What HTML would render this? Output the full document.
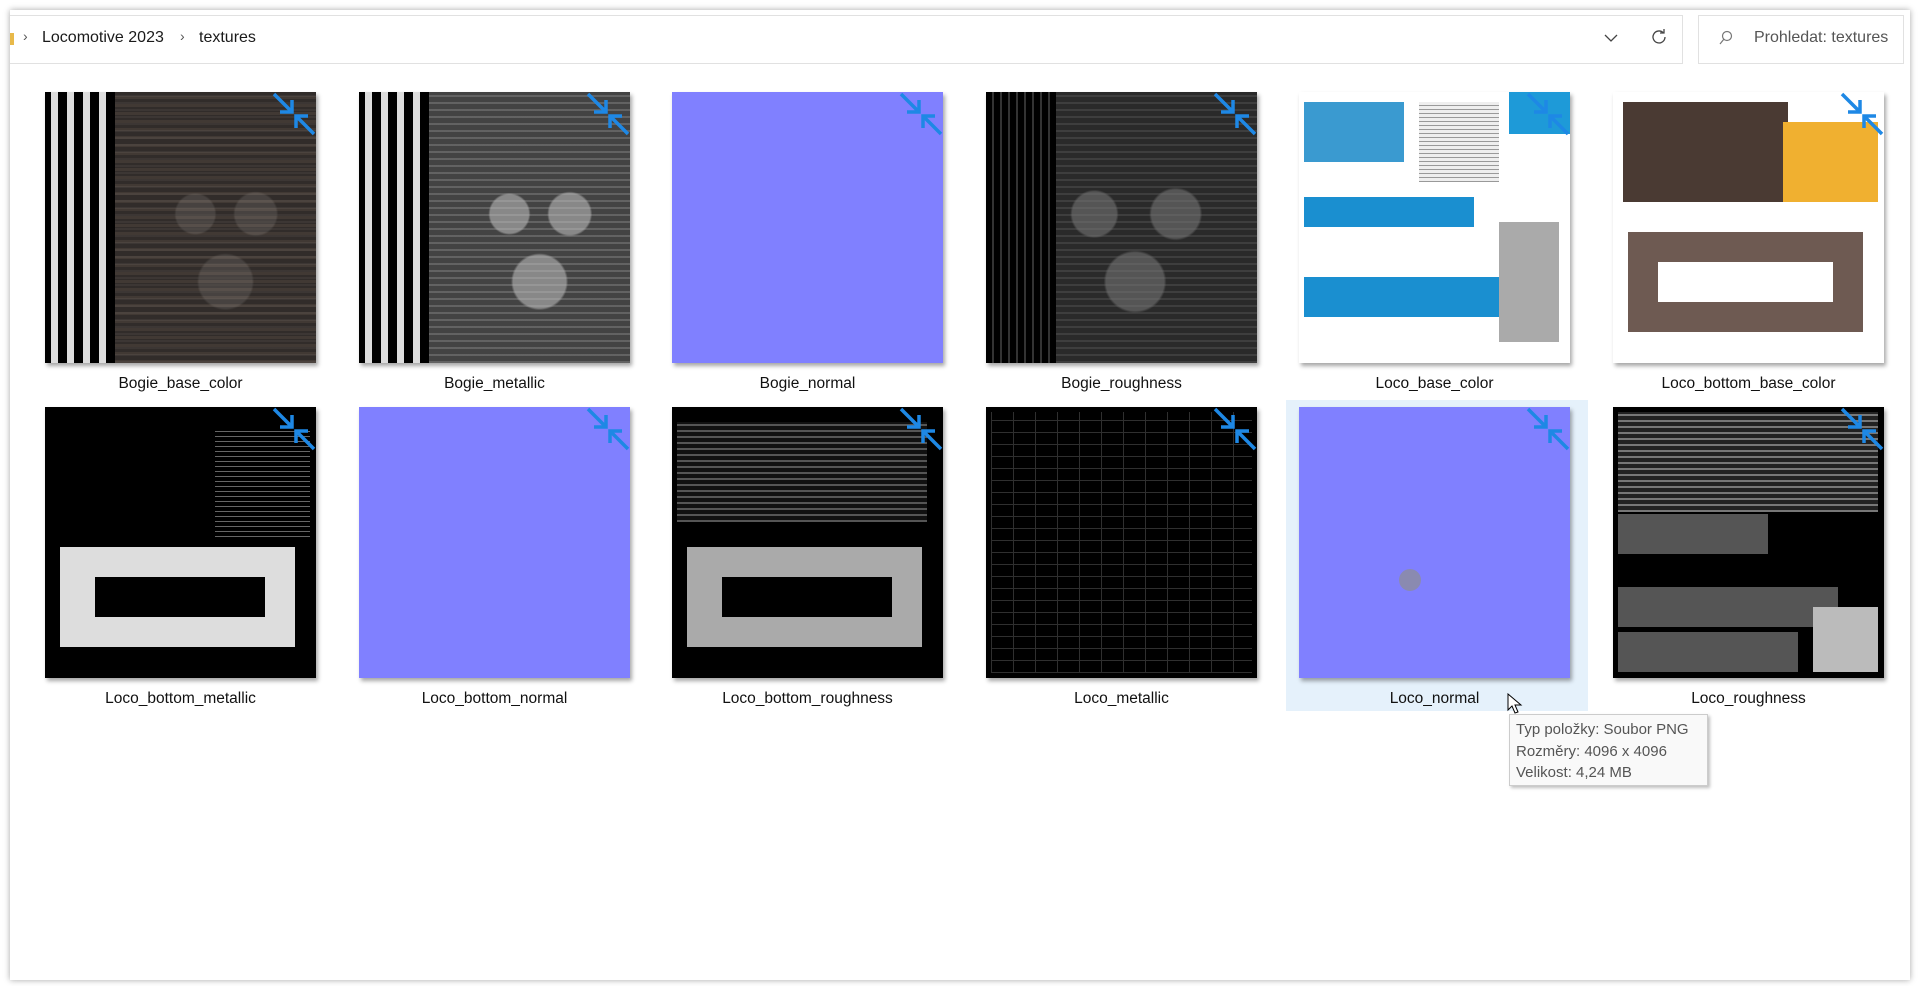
<!DOCTYPE html>
<html><head><meta charset="utf-8"><style>
*{margin:0;padding:0;box-sizing:border-box}
body{width:1920px;height:986px;background:#fff;font-family:"Segoe UI","Liberation Sans",sans-serif;position:relative;overflow:hidden}
.win{position:absolute;left:10px;top:10px;width:1900px;height:970px;background:#fff;box-shadow:0 0 6px rgba(0,0,0,.35)}
.addr{position:absolute;left:10px;top:15px;width:1673px;height:49px;border:1px solid #e1e1e1;border-left:none;background:#fff}
.search{position:absolute;left:1698px;top:15px;width:206px;height:49px;border:1px solid #e1e1e1;background:#fff}
.t{position:absolute;font-size:16px;color:#1a1a1a;white-space:nowrap}
.th{position:absolute;width:271px;height:271px;box-shadow:2px 3px 4px rgba(0,0,0,.35);overflow:hidden}
.lbl{position:absolute;width:313px;text-align:center;font-size:15.5px;color:#111}
.blue{background:#8080ff}
.dark{background:
 repeating-linear-gradient(0deg,rgba(120,120,120,.25) 0 2px,transparent 2px 7px),
 radial-gradient(circle at 40% 45%,#555 0 10%,transparent 11%),
 radial-gradient(circle at 70% 45%,#555 0 10%,transparent 11%),
 radial-gradient(circle at 55% 70%,#555 0 12%,transparent 13%),
 #2a2a2a}
.stripes{position:absolute;left:0;top:0;width:70px;height:100%;background:repeating-linear-gradient(90deg,#000 0 6px,#ddd 6px 13px,#000 13px 16px)}
.bk{background:#000}
</style></head><body>
<div class="win"></div>
<div class="addr"></div>
<div class="search"></div>
<div style="position:absolute;left:10px;top:33px;width:4px;height:12px;background:#e8b94a"></div>
<div class="t" style="left:23px;top:28px;color:#555;font-size:14px">›</div>
<div class="t" style="left:42px;top:29px">Locomotive 2023</div>
<div class="t" style="left:180px;top:28px;color:#555;font-size:14px">›</div>
<div class="t" style="left:199px;top:29px">textures</div>
<svg style="position:absolute;left:1603px;top:32px" width="16" height="12"><path d="M2 3l6 6 6-6" stroke="#444" fill="none" stroke-width="1.3"/></svg>
<svg style="position:absolute;left:1649px;top:27px" width="20" height="20"><path d="M16 10a6 6 0 1 1-2-4.5M15 2v4h-4" stroke="#444" fill="none" stroke-width="1.3"/></svg>
<svg style="position:absolute;left:1718px;top:30px" width="16" height="16"><circle cx="9" cy="6" r="4.5" stroke="#777" fill="none" stroke-width="1.2"/><path d="M6 9l-4 5" stroke="#777" stroke-width="1.2"/></svg>
<div class="t" style="left:1754px;top:29px;color:#555">Prohledat: textures</div>

<div style="position:absolute;left:1286px;top:400px;width:302px;height:311px;background:#e5f1fb"></div>

<div class="th" style="left:45px;top:92px;background:repeating-linear-gradient(0deg,#5a4a40 0 3px,#3a302b 3px 8px)"><div class="stripes"></div><div class="dark" style="position:absolute;left:70px;top:0;right:0;bottom:0;opacity:.5"></div></div>
<div class="th" style="left:359px;top:92px;background:#333"><div class="stripes"></div><div class="dark" style="position:absolute;left:70px;top:0;right:0;bottom:0;filter:brightness(1.6)"></div></div>
<div class="th blue" style="left:672px;top:92px"></div>
<div class="th dark" style="left:986px;top:92px"><div style="position:absolute;left:0;top:0;width:70px;height:100%;background:repeating-linear-gradient(90deg,#000 0 6px,#333 6px 8px)"></div></div>
<div class="th" style="left:1299px;top:92px;background:#fff">
 <div style="position:absolute;left:5px;top:10px;width:100px;height:60px;background:#3a9ad0"></div>
 <div style="position:absolute;left:210px;top:0;width:61px;height:42px;background:#1e9ad8"></div>
 <div style="position:absolute;left:5px;top:105px;width:170px;height:30px;background:#1a8fd0"></div>
 <div style="position:absolute;left:5px;top:185px;width:200px;height:40px;background:#1a8fd0"></div>
 <div style="position:absolute;left:120px;top:10px;width:80px;height:80px;background:repeating-linear-gradient(0deg,#999 0 1px,#eee 1px 4px)"></div>
 <div style="position:absolute;left:200px;top:130px;width:60px;height:120px;background:#aaa"></div>
</div>
<div class="th" style="left:1613px;top:92px;background:#fff">
 <div style="position:absolute;left:10px;top:10px;width:165px;height:100px;background:#4a3a33"></div>
 <div style="position:absolute;left:170px;top:30px;width:95px;height:80px;background:#f0b030"></div>
 <div style="position:absolute;left:15px;top:140px;width:235px;height:30px;background:#6e5a52"></div>
 <div style="position:absolute;left:15px;top:140px;width:30px;height:100px;background:#6e5a52"></div>
 <div style="position:absolute;left:15px;top:210px;width:235px;height:30px;background:#6e5a52"></div>
 <div style="position:absolute;left:220px;top:140px;width:30px;height:100px;background:#6e5a52"></div>
</div>

<div class="th bk" style="left:45px;top:407px">
 <div style="position:absolute;left:15px;top:140px;width:235px;height:100px;border:30px solid #ddd;border-left-width:35px"></div>
 <div style="position:absolute;left:170px;top:20px;width:95px;height:110px;background:repeating-linear-gradient(0deg,#666 0 1px,#000 1px 5px)"></div>
</div>
<div class="th blue" style="left:359px;top:407px"></div>
<div class="th bk" style="left:672px;top:407px">
 <div style="position:absolute;left:15px;top:140px;width:235px;height:100px;border:30px solid #aaa;border-left-width:35px"></div>
 <div style="position:absolute;left:5px;top:15px;width:250px;height:100px;background:repeating-linear-gradient(0deg,#555 0 2px,#111 2px 6px)"></div>
</div>
<div class="th bk" style="left:986px;top:407px"><div style="position:absolute;inset:5px;background:repeating-linear-gradient(0deg,#444 0 1px,transparent 1px 12px),repeating-linear-gradient(90deg,#444 0 1px,transparent 1px 22px);opacity:.7"></div></div>
<div class="th blue" style="left:1299px;top:407px"><div style="position:absolute;left:100px;top:162px;width:22px;height:22px;border-radius:50%;background:#8a8ab0"></div></div>
<div class="th bk" style="left:1613px;top:407px">
 <div style="position:absolute;left:5px;top:5px;width:260px;height:100px;background:repeating-linear-gradient(0deg,#777 0 2px,#222 2px 6px)"></div>
 <div style="position:absolute;left:5px;top:107px;width:150px;height:40px;background:#555"></div>
 <div style="position:absolute;left:5px;top:180px;width:220px;height:40px;background:#555"></div>
 <div style="position:absolute;left:5px;top:225px;width:180px;height:40px;background:#555"></div>
 <div style="position:absolute;left:200px;top:200px;width:65px;height:65px;background:#bbb"></div>
</div>

<svg style="position:absolute;left:0;top:0" width="1920" height="986">
<defs><g id="a" stroke="#1e88e5" stroke-width="3.5" fill="none"><path d="M0 0l18 18M18 6v12H6M40 40l-18-18M22 34V22h12"/></g></defs>
<use href="#a" x="274" y="94"/><use href="#a" x="588" y="94"/><use href="#a" x="901" y="94"/><use href="#a" x="1215" y="94"/><use href="#a" x="1528" y="94"/><use href="#a" x="1842" y="94"/>
<use href="#a" x="274" y="409"/><use href="#a" x="588" y="409"/><use href="#a" x="901" y="409"/><use href="#a" x="1215" y="409"/><use href="#a" x="1528" y="409"/><use href="#a" x="1842" y="409"/>
</svg>

<div class="lbl" style="left:24px;top:375px">Bogie_base_color</div>
<div class="lbl" style="left:338px;top:375px">Bogie_metallic</div>
<div class="lbl" style="left:651px;top:375px">Bogie_normal</div>
<div class="lbl" style="left:965px;top:375px">Bogie_roughness</div>
<div class="lbl" style="left:1278px;top:375px">Loco_base_color</div>
<div class="lbl" style="left:1592px;top:375px">Loco_bottom_base_color</div>
<div class="lbl" style="left:24px;top:690px">Loco_bottom_metallic</div>
<div class="lbl" style="left:338px;top:690px">Loco_bottom_normal</div>
<div class="lbl" style="left:651px;top:690px">Loco_bottom_roughness</div>
<div class="lbl" style="left:965px;top:690px">Loco_metallic</div>
<div class="lbl" style="left:1278px;top:690px">Loco_normal</div>
<div class="lbl" style="left:1592px;top:690px">Loco_roughness</div>

<svg style="position:absolute;left:1507px;top:693px" width="16" height="22"><path d="M1 1v16l4-4 3 7 3-1-3-7h6z" fill="#fff" stroke="#000" stroke-width="1"/></svg>
<div style="position:absolute;left:1509px;top:714px;width:199px;height:72px;background:#f9f9f9;border:1px solid #ccc;box-shadow:2px 2px 3px rgba(0,0,0,.25);padding:4px 0 0 6px;font-size:15px;line-height:21.5px;color:#555">Typ položky: Soubor PNG<br>Rozměry: 4096 x 4096<br>Velikost: 4,24 MB</div>
</body></html>
